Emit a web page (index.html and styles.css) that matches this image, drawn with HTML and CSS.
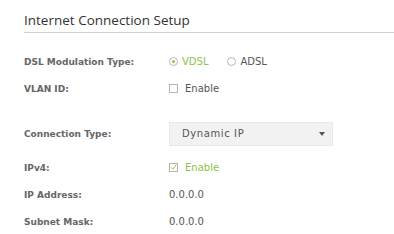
FILE: index.html
```html
<!DOCTYPE html>
<html lang="en">
<head>
    <meta charset="UTF-8">
    <title>Internet Connection Setup</title>
    <link rel="stylesheet" href="styles.css">
</head>
<body>
    <div class="panel">
        <div class="panel-title">Internet Connection Setup</div>

        <div class="row">
            <div class="label">DSL Modulation Type:</div>
            <div class="value">
                <span class="radio checked"><span class="dot"></span></span>
                <span class="opt active">VDSL</span>
                <span class="radio"></span>
                <span class="opt">ADSL</span>
            </div>
        </div>

        <div class="row">
            <div class="label">VLAN ID:</div>
            <div class="value">
                <span class="check"></span>
                <span class="opt">Enable</span>
            </div>
        </div>

        <div class="row row-select">
            <div class="label">Connection Type:</div>
            <div class="value">
                <div class="select">
                    <span>Dynamic IP</span>
                    <span class="arrow"></span>
                </div>
            </div>
        </div>

        <div class="row">
            <div class="label">IPv4:</div>
            <div class="value">
                <span class="check checked">
                    <svg width="9" height="9" viewBox="0 0 9 9"><path d="M1.2 4.2 L3.6 6.8 L8 0.8" fill="none" stroke="#8cc34b" stroke-width="1.2"/></svg>
                </span>
                <span class="opt active">Enable</span>
            </div>
        </div>

        <div class="row">
            <div class="label">IP Address:</div>
            <div class="value text">0.0.0.0</div>
        </div>

        <div class="row">
            <div class="label">Subnet Mask:</div>
            <div class="value text">0.0.0.0</div>
        </div>
    </div>
</body>
</html>
```

FILE: styles.css
```css
* {
    margin: 0;
    padding: 0;
    box-sizing: border-box;
}

body {
    font-family: "DejaVu Sans", Verdana, sans-serif;
    background-color: #ffffff;
    color: #555555;
    width: 394px;
    height: 234px;
    overflow: hidden;
}

.panel {
    padding: 11px 0 0 24px;
}

.panel-title {
    font-family: "Open Sans", "Noto Sans", sans-serif;
    font-size: 13.5px;
    color: #333333;
    height: 22px;
    border-bottom: 1px solid #d0d0d0;
    margin-bottom: 15px;
}

.row {
    display: flex;
    align-items: center;
    height: 27px;
    font-size: 9px;
}

.row-select {
    margin-top: 15px;
    margin-bottom: 4px;
    height: 33px;
}

.label {
    width: 145px;
    font-weight: bold;
    color: #666666;
}

.value {
    display: flex;
    align-items: center;
    color: #555555;
}

.value.text {
    font-size: 10px;
}

.opt {
    font-size: 10px;
    margin-right: 19px;
}

.opt.active {
    color: #8cc34b;
}

.radio {
    width: 9px;
    height: 9px;
    border: 1px solid #b5b5b5;
    border-radius: 50%;
    margin-right: 4px;
    display: flex;
    align-items: center;
    justify-content: center;
}

.radio .dot {
    width: 3px;
    height: 3px;
    border-radius: 50%;
    background: #8cc34b;
}

.check {
    width: 9px;
    height: 9px;
    border: 1px solid #b5b5b5;
    margin-right: 7px;
    display: flex;
    align-items: center;
    justify-content: center;
}

.select {
    width: 164px;
    height: 24px;
    background: #f2f2f2;
    border: 1px solid #e8e8e8;
    display: flex;
    align-items: center;
    justify-content: space-between;
    padding: 0 7px 0 12px;
    font-size: 10px;
    letter-spacing: 0.6px;
    color: #555555;
}

.arrow {
    width: 0;
    height: 0;
    border-left: 3px solid transparent;
    border-right: 3px solid transparent;
    border-top: 4px solid #555555;
}
```
